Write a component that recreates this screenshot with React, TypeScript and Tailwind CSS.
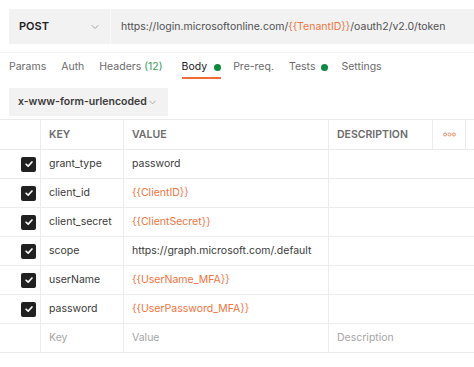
import { ChevronDown } from 'lucide-react';

const rows = [
  { key: 'grant_type', value: 'password', variable: false },
  { key: 'client_id', value: '{{ClientID}}', variable: true },
  { key: 'client_secret', value: '{{ClientSecret}}', variable: true },
  { key: 'scope', value: 'https://graph.microsoft.com/.default', variable: false },
  { key: 'userName', value: '{{UserName_MFA}}', variable: true },
  { key: 'password', value: '{{UserPassword_MFA}}', variable: true },
];

function Checkbox() {
  return (
    <div className="w-[15px] h-[15px] rounded-[2px] bg-[#212121] flex items-center justify-center">
      <svg viewBox="0 0 12 12" className="w-[10px] h-[10px]" fill="none" stroke="white" strokeWidth="2" strokeLinecap="round" strokeLinejoin="round">
        <path d="M2.5 6.3 L5 8.6 L9.6 3.6" />
      </svg>
    </div>
  );
}

function MoreIcon() {
  return (
    <svg viewBox="0 0 14 5" className="w-[13px] h-[5px]" fill="none" stroke="#e8774f" strokeWidth="0.9">
      <circle cx="2.2" cy="2.5" r="1.6" />
      <circle cx="7" cy="2.5" r="1.6" />
      <circle cx="11.8" cy="2.5" r="1.6" />
    </svg>
  );
}

export default function App() {
  return (
    <div className="w-[474px] h-[367px] bg-white overflow-hidden text-[10.5px] text-[#212121]" style={{ fontFamily: 'Inter, "Open Sans", sans-serif' }}>
      {/* Request bar */}
      <div className="pt-[9px] pl-[9px] pb-[8px] border-b border-[#f3f3f3]">
        <div className="h-[35px] bg-[#f2f2f2] flex items-center">
          <div className="w-[102px] h-full flex items-center justify-between pl-[10px] pr-[9px] border-r border-[#fafafa]">
            <span className="font-semibold text-[11px] text-[#212121]">POST</span>
            <ChevronDown className="w-[12px] h-[12px] text-[#8a8a8a]" strokeWidth={1.5} />
          </div>
          <div className="pl-[10px] text-[#505050] whitespace-nowrap">
            https://login.microsoftonline.com/<span className="text-[#f0743e]">{'{{TenantID}}'}</span>/oauth2/v2.0/token
          </div>
        </div>
      </div>

      {/* Tabs */}
      <div className="flex items-center h-[28px] pl-[9px] text-[#6b6b6b] whitespace-nowrap">
        <span>Params</span>
        <span className="ml-[15px]">Auth</span>
        <span className="ml-[15px]">Headers <span className="text-[#3a9a5c]">(12)</span></span>
        <div className="ml-[19px] h-full flex items-center relative text-[#212121]">
          <span>Body</span>
          <span className="ml-[7px] w-[7px] h-[7px] rounded-full bg-[#0c8a3e]" />
          <span className="absolute left-0 right-0 bottom-[2px] h-[2px] bg-[#f06a3a]" />
        </div>
        <span className="ml-[12px]">Pre-req.</span>
        <span className="ml-[15px]">Tests</span>
        <span className="ml-[6px] w-[7px] h-[7px] rounded-full bg-[#0c8a3e]" />
        <span className="ml-[13px]">Settings</span>
      </div>

      {/* Body type select */}
      <div className="pt-[7px] pl-[9px]">
        <div className="w-[159px] h-[28px] bg-[#f2f2f2] flex items-center justify-between pl-[9px] pr-[10px]">
          <span className="font-semibold text-[10.5px] text-[#3a3a3a] whitespace-nowrap">x-www-form-urlencoded</span>
          <ChevronDown className="w-[11px] h-[11px] text-[#8a8a8a]" strokeWidth={1.5} />
        </div>
      </div>

      {/* Table */}
      <div className="mt-[3px] border-t border-[#ececec]">
        <div className="flex h-[30px] border-b border-[#ececec] font-semibold text-[#6b6b6b]">
          <div className="w-[41px] border-r border-[#ececec]" />
          <div className="w-[83px] border-r border-[#ececec] flex items-center pl-[8px]">KEY</div>
          <div className="w-[205px] border-r border-[#ececec] flex items-center pl-[8px]">VALUE</div>
          <div className="w-[104px] border-r border-[#ececec] flex items-center pl-[8px]">DESCRIPTION</div>
          <div className="w-[33px] border-r border-[#ececec] flex items-center justify-center">
            <MoreIcon />
          </div>
          <div className="flex-1" />
        </div>
        {rows.map((r) => (
          <div key={r.key} className="flex h-[29px] border-b border-[#ececec]">
            <div className="w-[41px] border-r border-[#ececec] flex items-center justify-end pr-[4px]">
              <Checkbox />
            </div>
            <div className="w-[83px] border-r border-[#ececec] flex items-center pl-[8px] text-[#3a3a3a] whitespace-nowrap">{r.key}</div>
            <div className={`w-[205px] border-r border-[#ececec] flex items-center pl-[8px] whitespace-nowrap ${r.variable ? 'text-[#f0743e]' : 'text-[#3a3a3a]'}`}>
              {r.value}
            </div>
            <div className="flex-1" />
          </div>
        ))}
        <div className="flex h-[29px] border-b border-[#ececec] text-[#a6a6a6]">
          <div className="w-[41px] border-r border-[#ececec]" />
          <div className="w-[83px] border-r border-[#ececec] flex items-center pl-[8px]">Key</div>
          <div className="w-[205px] border-r border-[#ececec] flex items-center pl-[8px]">Value</div>
          <div className="flex-1 flex items-center pl-[8px]">Description</div>
        </div>
      </div>
    </div>
  );
}
